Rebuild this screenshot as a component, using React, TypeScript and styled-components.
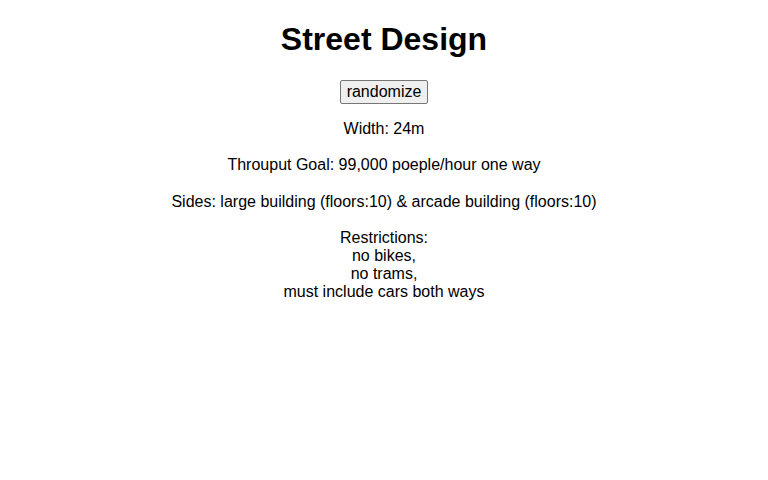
import * as React from 'react';
import styled, { createGlobalStyle } from 'styled-components';

const GlobalStyle = createGlobalStyle`
  body {
    margin: 0;
    font-family: "Liberation Sans", Arial, sans-serif;
    background: #fff;
    color: #000;
  }
`;

const Page = styled.div`
  display: flex;
  flex-direction: column;
  align-items: center;
  padding: 0 8px;
  text-align: center;
`;

const Title = styled.h1`
  font-size: 32px;
  font-weight: bold;
  margin: 21.44px 0;
`;

const RandomButton = styled.button`
  font-family: "Liberation Sans", Arial, sans-serif;
  font-size: 16px;
  color: #000;
  background: #efefef;
  border: 1px solid #767676;
  border-radius: 2px;
  padding: 2px 6px;
  cursor: pointer;

  &:hover {
    background: #e5e5e5;
  }
`;

const Details = styled.div`
  display: flex;
  flex-direction: column;
  gap: 18.4px;
  margin-top: 16px;
`;

const Line = styled.p`
  font-size: 16px;
  line-height: 18px;
  margin: 0;
`;

const restrictions = ['no bikes,', 'no trams,', 'must include cars both ways'];

const App = () => (
  <Page>
    <GlobalStyle />
    <Title>Street Design</Title>
    <RandomButton>randomize</RandomButton>
    <Details>
      <Line>Width: 24m</Line>
      <Line>Throuput Goal: 99,000 poeple/hour one way</Line>
      <Line>Sides: large building (floors:10) &amp; arcade building (floors:10)</Line>
      <Line>
        Restrictions:
        {restrictions.map((r) => (
          <React.Fragment key={r}>
            <br />
            {r}
          </React.Fragment>
        ))}
      </Line>
    </Details>
  </Page>
);

export default App;
